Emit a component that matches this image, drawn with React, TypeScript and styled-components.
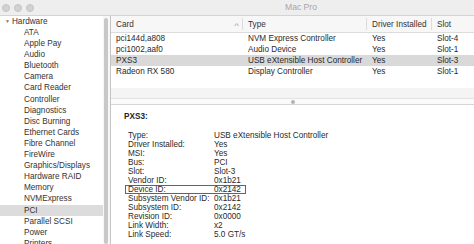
import styled, { createGlobalStyle } from 'styled-components';

const GlobalStyle = createGlobalStyle`
  html, body {
    margin: 0;
    padding: 0;
    background: #ffffff;
  }
  body {
    font-family: 'Liberation Sans', Arial, sans-serif;
    font-size: 8.2px;
    color: #2a2a2a;
  }
`;

const hardware = [
  'ATA',
  'Apple Pay',
  'Audio',
  'Bluetooth',
  'Camera',
  'Card Reader',
  'Controller',
  'Diagnostics',
  'Disc Burning',
  'Ethernet Cards',
  'Fibre Channel',
  'FireWire',
  'Graphics/Displays',
  'Hardware RAID',
  'Memory',
  'NVMExpress',
  'PCI',
  'Parallel SCSI',
  'Power',
  'Printers',
];

const cards = [
  ['pci144d,a808', 'NVM Express Controller', 'Yes', 'Slot-4'],
  ['pci1002,aaf0', 'Audio Device', 'Yes', 'Slot-1'],
  ['PXS3', 'USB eXtensible Host Controller', 'Yes', 'Slot-3'],
  ['Radeon RX 580', 'Display Controller', 'Yes', 'Slot-1'],
];

const props = [
  ['Type:', 'USB eXtensible Host Controller'],
  ['Driver Installed:', 'Yes'],
  ['MSI:', 'Yes'],
  ['Bus:', 'PCI'],
  ['Slot:', 'Slot-3'],
  ['Vendor ID:', '0x1b21'],
  ['Device ID:', '0x2142'],
  ['Subsystem Vendor ID:', '0x1b21'],
  ['Subsystem ID:', '0x2142'],
  ['Revision ID:', '0x0000'],
  ['Link Width:', 'x2'],
  ['Link Speed:', '5.0 GT/s'],
];

export default function App() {
  return (
    <>
      <GlobalStyle />
      <Window>
        <TitleBar>
          <Lights>
            <Light />
            <Light />
            <Light />
          </Lights>
          <Title>Mac Pro</Title>
        </TitleBar>
        <Main>
          <Sidebar>
            <GroupHead>
              <Caret>▼</Caret>Hardware
            </GroupHead>
            {hardware.map((name) => (
              <SideItem key={name} $selected={name === 'PCI'}>
                {name}
              </SideItem>
            ))}
          </Sidebar>
          <ScrollTrack>
            <ScrollThumb />
          </ScrollTrack>
          <Divider />
          <Content>
            <Table>
              <HeaderRow>
                <HeaderCell>
                  Card
                  <SortArrow>^</SortArrow>
                </HeaderCell>
                <HeaderCell>Type</HeaderCell>
                <HeaderCell>Driver Installed</HeaderCell>
                <HeaderCell $last>Slot</HeaderCell>
              </HeaderRow>
              {cards.map((row) => (
                <Row key={row[0]} $selected={row[0] === 'PXS3'}>
                  {row.map((cell, i) => (
                    <Cell key={i}>{cell}</Cell>
                  ))}
                </Row>
              ))}
              <Row />
              <Row $striped />
            </Table>
            <Splitter>
              <Grip />
            </Splitter>
            <Detail>
              <DetailTitle>PXS3:</DetailTitle>
              <PropList>
                {props.map(([label, value]) => (
                  <PropRow key={label} $boxed={label === 'Device ID:'}>
                    <PropLabel>{label}</PropLabel>
                    <span>{value}</span>
                  </PropRow>
                ))}
              </PropList>
            </Detail>
          </Content>
        </Main>
      </Window>
    </>
  );
}

const Window = styled.div`
  width: 474px;
  height: 244px;
  display: flex;
  flex-direction: column;
  overflow: hidden;
  background: #ffffff;
`;

const TitleBar = styled.div`
  height: 15px;
  flex: none;
  display: flex;
  align-items: center;
  position: relative;
  background: #eeeeee;
  border-bottom: 1px solid #d4d4d4;
`;

const Lights = styled.div`
  display: flex;
  gap: 4px;
  padding-left: 2px;
`;

const Light = styled.span`
  width: 8px;
  height: 8px;
  border-radius: 50%;
  background: #d2d2d2;
  border: 0.5px solid #c4c4c4;
  box-sizing: border-box;
`;

const Title = styled.div`
  position: absolute;
  left: 285px;
  top: 2px;
  color: #a6a6a6;
  font-size: 8.6px;
  line-height: 11px;
`;

const Main = styled.div`
  flex: 1;
  display: flex;
  min-height: 0;
`;

const Sidebar = styled.div`
  width: 103px;
  flex: none;
  overflow: hidden;
  background: #ffffff;
  color: #333333;
`;

const GroupHead = styled.div`
  height: 11px;
  line-height: 11px;
  padding-left: 5px;
  display: flex;
  align-items: center;
`;

const Caret = styled.span`
  font-size: 5px;
  color: #777777;
  margin-right: 2px;
`;

const SideItem = styled.div<{ $selected?: boolean }>`
  height: 11.1px;
  line-height: 11.1px;
  padding-left: 24px;
  white-space: nowrap;
  background: ${(p) => (p.$selected ? '#dcdcdc' : 'transparent')};
`;

const ScrollTrack = styled.div`
  width: 7px;
  flex: none;
  background: #f7f7f7;
  padding: 2px 0 0 1px;
  box-sizing: border-box;
`;

const ScrollThumb = styled.div`
  width: 4px;
  height: 100%;
  border-radius: 2px;
  background: #c8c8c8;
`;

const Divider = styled.div`
  width: 1px;
  flex: none;
  background: #c4c4c4;
`;

const Content = styled.div`
  flex: 1;
  display: flex;
  flex-direction: column;
  min-width: 0;
`;

const Table = styled.div`
  height: 82px;
  flex: none;
  overflow: hidden;
`;

const columns = '132px 124px 65px 1fr';

const HeaderRow = styled.div`
  display: grid;
  grid-template-columns: ${columns};
  height: 16px;
  background: #f7f7f7;
  border-bottom: 1px solid #dcdcdc;
  color: #333333;
`;

const HeaderCell = styled.div<{ $last?: boolean }>`
  display: flex;
  align-items: center;
  justify-content: space-between;
  padding: 0 4px 0 5px;
  margin: 2px 0;
  border-right: ${(p) => (p.$last ? 'none' : '1px solid #dcdcdc')};
`;

const SortArrow = styled.span`
  color: #9a9a9a;
  font-size: 7px;
  transform: scaleX(1.4);
  padding-top: 2px;
`;

const Row = styled.div<{ $selected?: boolean; $striped?: boolean }>`
  display: grid;
  grid-template-columns: ${columns};
  height: 11px;
  line-height: 11px;
  background: ${(p) => (p.$selected ? '#d9d9d9' : p.$striped ? '#f4f4f4' : '#ffffff')};
`;

const Cell = styled.div`
  padding-left: 5px;
  white-space: nowrap;
  overflow: hidden;
`;

const Splitter = styled.div`
  height: 7px;
  flex: none;
  display: flex;
  align-items: center;
  justify-content: center;
  background: #fafafa;
  border-top: 1px solid #e2e2e2;
  border-bottom: 1px solid #d6d6d6;
  box-sizing: border-box;
`;

const Grip = styled.span`
  width: 4px;
  height: 4px;
  border-radius: 50%;
  background: #b4b4b4;
`;

const Detail = styled.div`
  flex: 1;
  padding: 7px 0 0 13px;
  background: #ffffff;
`;

const DetailTitle = styled.div`
  font-weight: bold;
  line-height: 9px;
  margin-bottom: 10px;
  color: #222222;
`;

const PropList = styled.div`
  display: flex;
  flex-direction: column;
  align-items: flex-start;
  padding-left: 1px;
`;

const PropRow = styled.div<{ $boxed?: boolean }>`
  display: flex;
  height: 9px;
  line-height: 9px;
  padding: 0 5px 0 3px;
  white-space: nowrap;
  box-shadow: ${(p) => (p.$boxed ? 'inset 0 0 0 1px #d2323e' : 'none')};
`;

const PropLabel = styled.span`
  width: 86px;
  flex: none;
`;
